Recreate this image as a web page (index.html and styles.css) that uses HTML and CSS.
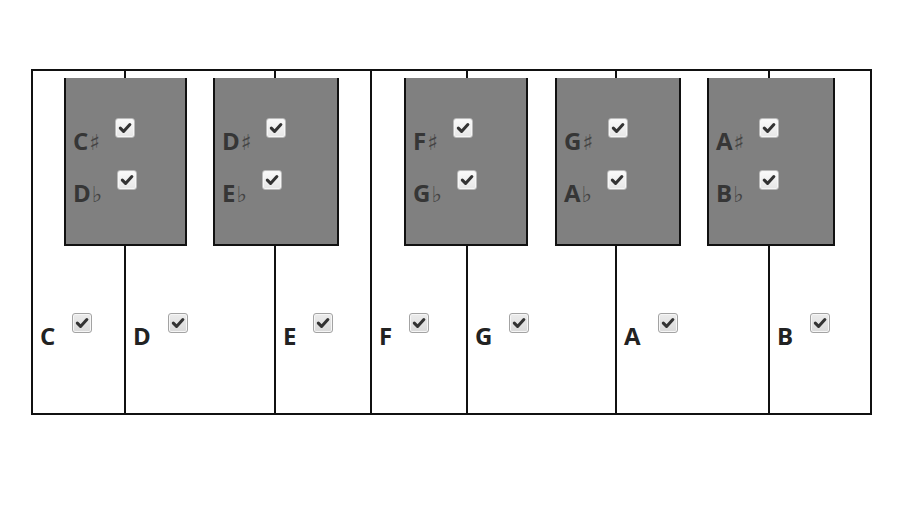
FILE: index.html
```html
<!DOCTYPE html>
<html>
<head>
<meta charset="utf-8">
<link rel="stylesheet" href="styles.css">
</head>
<body>
<div class="piano">
  <div class="key white k-c"><label class="note"><span class="name">C</span><span class="box"><svg viewBox="0 0 20 20"><path d="M4.8 10.2 L8.4 13.8 L15.4 6.2" /></svg></span></label></div>
  <div class="key white k-d"><label class="note"><span class="name">D</span><span class="box"><svg viewBox="0 0 20 20"><path d="M4.8 10.2 L8.4 13.8 L15.4 6.2" /></svg></span></label></div>
  <div class="key white k-e"><label class="note"><span class="name">E</span><span class="box"><svg viewBox="0 0 20 20"><path d="M4.8 10.2 L8.4 13.8 L15.4 6.2" /></svg></span></label></div>
  <div class="key white k-f"><label class="note"><span class="name">F</span><span class="box"><svg viewBox="0 0 20 20"><path d="M4.8 10.2 L8.4 13.8 L15.4 6.2" /></svg></span></label></div>
  <div class="key white k-g"><label class="note"><span class="name">G</span><span class="box"><svg viewBox="0 0 20 20"><path d="M4.8 10.2 L8.4 13.8 L15.4 6.2" /></svg></span></label></div>
  <div class="key white k-a"><label class="note"><span class="name">A</span><span class="box"><svg viewBox="0 0 20 20"><path d="M4.8 10.2 L8.4 13.8 L15.4 6.2" /></svg></span></label></div>
  <div class="key white k-b"><label class="note"><span class="name">B</span><span class="box"><svg viewBox="0 0 20 20"><path d="M4.8 10.2 L8.4 13.8 L15.4 6.2" /></svg></span></label></div>

  <div class="key black k-cs">
    <label class="note"><span class="name">C<span class="acc">♯</span></span><span class="box"><svg viewBox="0 0 20 20"><path d="M4.8 10.2 L8.4 13.8 L15.4 6.2" /></svg></span></label>
    <label class="note"><span class="name">D<span class="acc">♭</span></span><span class="box"><svg viewBox="0 0 20 20"><path d="M4.8 10.2 L8.4 13.8 L15.4 6.2" /></svg></span></label>
  </div>
  <div class="key black k-ds">
    <label class="note"><span class="name">D<span class="acc">♯</span></span><span class="box"><svg viewBox="0 0 20 20"><path d="M4.8 10.2 L8.4 13.8 L15.4 6.2" /></svg></span></label>
    <label class="note"><span class="name">E<span class="acc">♭</span></span><span class="box"><svg viewBox="0 0 20 20"><path d="M4.8 10.2 L8.4 13.8 L15.4 6.2" /></svg></span></label>
  </div>
  <div class="key black k-fs">
    <label class="note"><span class="name">F<span class="acc">♯</span></span><span class="box"><svg viewBox="0 0 20 20"><path d="M4.8 10.2 L8.4 13.8 L15.4 6.2" /></svg></span></label>
    <label class="note"><span class="name">G<span class="acc">♭</span></span><span class="box"><svg viewBox="0 0 20 20"><path d="M4.8 10.2 L8.4 13.8 L15.4 6.2" /></svg></span></label>
  </div>
  <div class="key black k-gs">
    <label class="note"><span class="name">G<span class="acc">♯</span></span><span class="box"><svg viewBox="0 0 20 20"><path d="M4.8 10.2 L8.4 13.8 L15.4 6.2" /></svg></span></label>
    <label class="note"><span class="name">A<span class="acc">♭</span></span><span class="box"><svg viewBox="0 0 20 20"><path d="M4.8 10.2 L8.4 13.8 L15.4 6.2" /></svg></span></label>
  </div>
  <div class="key black k-as">
    <label class="note"><span class="name">A<span class="acc">♯</span></span><span class="box"><svg viewBox="0 0 20 20"><path d="M4.8 10.2 L8.4 13.8 L15.4 6.2" /></svg></span></label>
    <label class="note"><span class="name">B<span class="acc">♭</span></span><span class="box"><svg viewBox="0 0 20 20"><path d="M4.8 10.2 L8.4 13.8 L15.4 6.2" /></svg></span></label>
  </div>
</div>
</body>
</html>
```

FILE: styles.css
```css
* { box-sizing: border-box; }

body {
  margin: 0;
  background: #ffffff;
  font-family: "Open Sans", "DejaVu Sans", sans-serif;
}

.piano {
  position: relative;
  display: flex;
  width: 841px;
  height: 346px;
  margin: 69px 0 0 31px;
  border: 2px solid #111;
}

.key.white {
  height: 100%;
  padding: 242px 0 0 7px;
  border-right: 2px solid #111;
}
.key.white.k-b { border-right: none; }

.k-c { width: 93px; }
.k-d { width: 150px; }
.k-e { width: 96px; }
.k-f { width: 96px; }
.k-g { width: 149px; }
.k-a { width: 153px; }
.k-b { width: 100px; }

.key.black {
  position: absolute;
  top: 7px;
  height: 168px;
  background: #808080;
  border: 2px solid #111;
  border-top: none;
  padding: 40px 0 0 7px;
  display: flex;
  flex-direction: column;
  gap: 15px;
}
.k-cs { left: 31px; width: 123px; }
.k-ds { left: 180px; width: 126px; }
.k-fs { left: 371px; width: 124px; }
.k-gs { left: 522px; width: 126px; }
.k-as { left: 674px; width: 128px; }

.note {
  display: flex;
  align-items: flex-start;
}

.name {
  margin-top: 11px;
  font-size: 24px;
  line-height: 24px;
  font-weight: 700;
  color: #222;
}
.black .name { color: #363636; }

.acc {
  font-family: "DejaVu Sans", sans-serif;
  font-weight: 400;
  font-size: 22px;
  color: #444;
  margin-left: 1px;
}

.box {
  width: 20px;
  height: 20px;
  margin-left: 17px;
  border: 1px solid #a3a3a3;
  border-radius: 3px;
  background: linear-gradient(#ececec, #d9d9d9);
  box-shadow: inset 0 0 0 1px #f6f6f6;
  display: flex;
  align-items: center;
  justify-content: center;
}
.black .box {
  margin-left: 15px;
  background: linear-gradient(#fafafa, #e6e6e6);
  border-color: #b9b9b9;
}

.box svg {
  width: 18px;
  height: 18px;
}
.box path {
  fill: none;
  stroke: #333;
  stroke-width: 3.4;
  stroke-linecap: round;
  stroke-linejoin: round;
}
```
